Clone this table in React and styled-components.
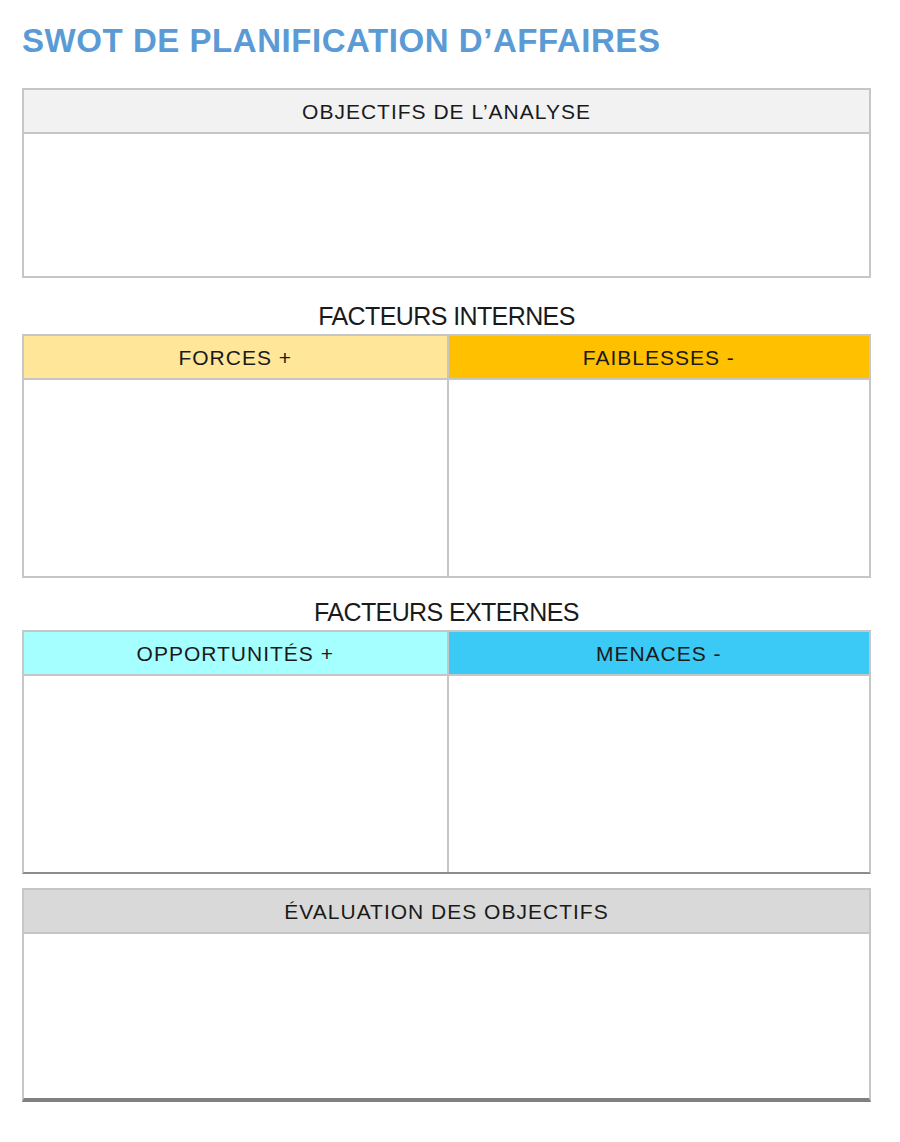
import React from 'react';
import styled, { createGlobalStyle } from 'styled-components';

const GlobalStyle = createGlobalStyle`
  body {
    margin: 0;
    background: #ffffff;
    font-family: "Liberation Sans", Arial, sans-serif;
    color: #1a1a1a;
  }
`;

const Page = styled.div`
  width: 849px;
  padding: 22px 22px 0 22px;
`;

const Title = styled.h1`
  margin: 0 0 28px 0;
  height: 38px;
  line-height: 38px;
  font-size: 33px;
  font-weight: bold;
  color: #5b9bd5;
  letter-spacing: 0.55px;
  white-space: nowrap;
`;

const Table = styled.div`
  display: grid;
  grid-template-columns: ${p => (p.cols === 2 ? '1fr 1fr' : '1fr')};
  border: 2px solid #c6c6c6;
  border-bottom: ${p => p.bottom || '2px solid #c6c6c6'};
`;

const Head = styled.div`
  height: 44px;
  display: flex;
  align-items: center;
  justify-content: center;
  padding-top: 2px;
  box-sizing: border-box;
  background: ${p => p.bg};
  border-bottom: 2px solid #c6c6c6;
  border-left: ${p => (p.split ? '2px solid #c6c6c6' : 'none')};
  font-size: 21px;
  letter-spacing: 1px;
  white-space: nowrap;
`;

const Cell = styled.div`
  height: ${p => p.h}px;
  background: #ffffff;
  border-left: ${p => (p.split ? '2px solid #c6c6c6' : 'none')};
`;

const Section = styled.div`
  height: 41px;
  display: flex;
  align-items: flex-end;
  justify-content: center;
  padding-bottom: 3px;
  box-sizing: border-box;
  font-size: 25px;
  letter-spacing: -0.6px;
  white-space: nowrap;
`;

const Gap = styled.div`
  height: ${p => p.h}px;
`;

const Quad = ({ left, right, leftBg, rightBg, h, bottom }) => (
  <Table cols={2} bottom={bottom}>
    <Head bg={leftBg}>{left}</Head>
    <Head bg={rightBg} split>{right}</Head>
    <Cell h={h} />
    <Cell h={h} split />
  </Table>
);

export default function App() {
  return (
    <>
      <GlobalStyle />
      <Page>
        <Title>SWOT DE PLANIFICATION D’AFFAIRES</Title>

        <Table>
          <Head bg="#f2f2f2">OBJECTIFS DE L’ANALYSE</Head>
          <Cell h={142} />
        </Table>

        <Gap h={15} />
        <Section>FACTEURS INTERNES</Section>
        <Quad
          left="FORCES +"
          right="FAIBLESSES -"
          leftBg="#ffe699"
          rightBg="#ffc000"
          h={196}
        />

        <Gap h={11} />
        <Section>FACTEURS EXTERNES</Section>
        <Quad
          left="OPPORTUNITÉS +"
          right="MENACES -"
          leftBg="#a5ffff"
          rightBg="#3bc9f5"
          h={196}
          bottom="2px solid #8c8c8c"
        />

        <Gap h={14} />
        <Table bottom="4px solid #808080">
          <Head bg="#d9d9d9">ÉVALUATION DES OBJECTIFS</Head>
          <Cell h={164} />
        </Table>
      </Page>
    </>
  );
}
